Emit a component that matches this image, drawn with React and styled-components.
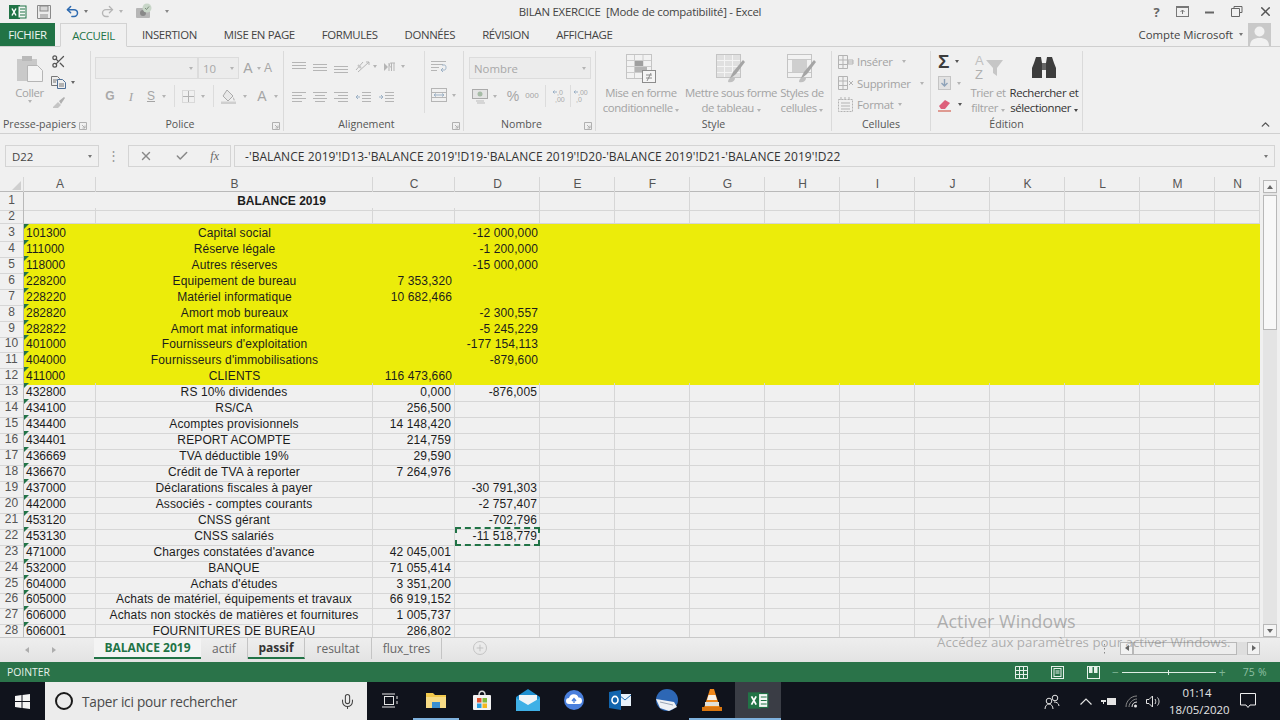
import React from "react";
import styled, { createGlobalStyle } from "styled-components";
import { Scissors, Undo2, Redo2, Check, X, ChevronUp, Mic, Plus } from "lucide-react";

const Global = createGlobalStyle`
  html, body { margin: 0; padding: 0; background: #f0f0f0; overflow: hidden; }
  #root { width: 1280px; height: 720px; }
`;

const UI = `"Open Sans", "Noto Sans", "Liberation Sans", sans-serif`;

const Page = styled.div`
  position: relative;
  width: 1280px;
  height: 720px;
  overflow: hidden;
  display: flex;
  flex-direction: column;
  background: #f0f0f0;
  font-family: ${UI};
  color: #444;
`;

/* ---------- title bar ---------- */
const TitleBar = styled.div`
  height: 23px;
  display: grid;
  grid-template-columns: 1fr auto 1fr;
  align-items: center;
`;
const Qat = styled.div`
  display: flex;
  align-items: center;
  padding-left: 9px;
`;
const QatSlot = styled.span`
  display: inline-flex;
  align-items: center;
  margin-left: ${(p) => p.$ml || 0}px;
`;
const Title = styled.div`
  font-size: 11.4px;
  letter-spacing: -0.25px;
  color: #444;
  white-space: pre;
`;
const WinControls = styled.div`
  display: flex;
  justify-content: flex-end;
  align-items: center;
  gap: 15px;
  padding-right: 7px;
  color: #555;
`;
const HelpMark = styled.span`
  font-size: 13px;
  font-weight: 700;
  color: #666;
  width: 13px;
  text-align: center;
  margin-right: -2px;
`;

/* ---------- tabs ---------- */
const TabBar = styled.div`
  height: 24px;
  display: flex;
  align-items: stretch;
  border-bottom: 1px solid #cfcfcf;
  box-sizing: border-box;
  letter-spacing: -0.38px;
`;
const FileTab = styled.div`
  width: 55px;
  background: #217346;
  color: #eef5f0;
  font-size: 11.4px;
  display: flex;
  align-items: center;
  justify-content: center;
`;
const HomeTab = styled.div`
  width: 67px;
  margin-left: 5px;
  height: 24px;
  box-sizing: border-box;
  border: 1px solid #d2d2d2;
  border-bottom: 1px solid #f0f0f0;
  color: #217346;
  font-size: 11.4px;
  display: flex;
  align-items: center;
  justify-content: center;
`;
const TabList = styled.div`
  display: flex;
  align-items: center;
  gap: 27px;
  margin-left: 15px;
  font-size: 11.4px;
  color: #444;
`;
const Account = styled.div`
  margin-left: auto;
  display: flex;
  align-items: center;
  font-size: 11.4px;
  letter-spacing: -0.05px;
  color: #444;
  padding-right: 9px;
`;
const Avatar = styled.div`
  width: 23px;
  height: 23px;
  margin-left: 5px;
  background: #c9c9c9;
  overflow: hidden;
`;

/* ---------- ribbon ---------- */
const Ribbon = styled.div`
  height: 87px;
  box-sizing: border-box;
  border-bottom: 1px solid #d0d0d0;
  display: flex;
  padding-top: 4px;
`;
const Group = styled.div`
  width: ${(p) => p.$w}px;
  box-sizing: border-box;
  border-right: ${(p) => (p.$noLine ? "none" : "1px solid #dadada")};
  height: 80px;
  display: flex;
  flex-direction: column;
  position: relative;
`;
const GroupBody = styled.div`
  flex: 1;
  display: flex;
  min-height: 0;
`;
const GroupLabel = styled.div`
  height: 13px;
  line-height: 13px;
  font-size: 10.6px;
  color: #555;
  text-align: ${(p) => p.$align || "center"};
  padding-left: ${(p) => p.$pl || 0}px;
  padding-right: ${(p) => p.$pr || 0}px;
  white-space: nowrap;
`;
const Launcher = styled.svg`
  position: absolute;
  right: 3px;
  bottom: 1px;
  width: 8px;
  height: 8px;
`;
const Stack = styled.div`
  display: flex;
  flex-direction: column;
  padding-left: ${(p) => p.$pl || 0}px;
  padding-top: ${(p) => p.$pt || 0}px;
  gap: ${(p) => p.$gap || 0}px;
  width: ${(p) => (p.$w ? `${p.$w}px` : "auto")};
  align-items: ${(p) => p.$align || "stretch"};
`;
const Row = styled.div`
  display: flex;
  align-items: center;
  gap: ${(p) => p.$gap || 0}px;
  height: ${(p) => (p.$h ? `${p.$h}px` : "auto")};
  padding-left: ${(p) => p.$pl || 0}px;
`;
const Combo = styled.div`
  width: ${(p) => p.$w}px;
  height: 22px;
  box-sizing: border-box;
  border: 1px solid #dcdcdc;
  background: #ececec;
  display: flex;
  align-items: center;
  justify-content: space-between;
  padding: 0 4px;
  font-size: 11.4px;
  color: #a8a8a8;
`;
const Caret = styled.span`
  display: inline-block;
  width: 0;
  height: 0;
  border-left: 2.5px solid transparent;
  border-right: 2.5px solid transparent;
  border-top: 3px solid ${(p) => p.$c || "#b4b4b4"};
  margin-left: ${(p) => p.$ml || 0}px;
`;
const Glyph = styled.span`
  font-family: ${(p) => p.$serif ? '"Liberation Serif", serif' : '"Liberation Sans", sans-serif'};
  font-size: ${(p) => p.$s || 12}px;
  font-weight: ${(p) => (p.$b ? 700 : 400)};
  font-style: ${(p) => (p.$i ? "italic" : "normal")};
  text-decoration: ${(p) => (p.$u ? "underline" : "none")};
  color: ${(p) => p.$c || "#a9a9a9"};
  display: inline-block;
  width: ${(p) => (p.$w ? `${p.$w}px` : "auto")};
  margin-left: ${(p) => p.$ml || 0}px;
  text-align: center;
  line-height: 1;
`;
const VSep = styled.span`
  width: 1px;
  height: ${(p) => p.$h || 22}px;
  background: #dcdcdc;
  margin: ${(p) => p.$m || "0 8px"};
`;
const BigLabel = styled.div`
  font-size: 11.4px;
  line-height: 15px;
  letter-spacing: -0.38px;
  color: ${(p) => p.$c || "#a3a3a3"};
  text-align: center;
  white-space: nowrap;
  margin-top: ${(p) => p.$mt || 0}px;
`;
const StyleBtn = styled.div`
  width: ${(p) => p.$w}px;
  display: flex;
  flex-direction: column;
  align-items: center;
  padding-top: 3px;
`;
const CellBtn = styled.div`
  display: flex;
  align-items: center;
  gap: 3px;
  height: 21.5px;
  font-size: 11.4px;
  letter-spacing: -0.3px;
  color: #a3a3a3;
`;

/* ---------- formula bar ---------- */
const FormulaArea = styled.div`
  height: 22px;
  margin-top: 11px;
  display: flex;
  align-items: stretch;
  padding-left: 5px;
  padding-right: 5px;
`;
const NameBox = styled.div`
  width: 94px;
  box-sizing: border-box;
  border: 1px solid #d4d4d4;
  display: flex;
  align-items: center;
  justify-content: space-between;
  padding: 0 6px;
  font-size: 11.4px;
  color: #444;
`;
const Dots = styled.div`
  width: 29px;
  text-align: center;
  font-size: 13px;
  line-height: 20px;
  color: #999;
`;
const FxButtons = styled.div`
  width: 103px;
  box-sizing: border-box;
  border: 1px solid #d4d4d4;
  display: flex;
  align-items: center;
  justify-content: space-between;
  padding: 0 11px 0 10px;
  color: #888;
`;
const FormulaInput = styled.div`
  flex: 1;
  margin-left: 3px;
  box-sizing: border-box;
  border: 1px solid #d4d4d4;
  display: flex;
  align-items: center;
  justify-content: space-between;
  padding: 0 6px 0 10px;
  font-size: 12px;
  letter-spacing: 0.07px;
  color: #333;
  white-space: pre;
`;

/* ---------- sheet ---------- */
const SheetArea = styled.div`
  margin-top: 10px;
  height: 460px;
  display: flex;
  overflow: hidden;
`;
const Sheet = styled.div`
  width: 1260px;
  overflow: hidden;
  font-family: "Liberation Sans", sans-serif;
`;
const COLS = "24px 72px 277px 82px 85px repeat(9, 75px) 45px";
const HeaderRow = styled.div`
  display: grid;
  grid-template-columns: ${COLS};
  height: 15px;
  box-sizing: border-box;
  border-bottom: 1px solid #b9b9b9;
`;
const ColHead = styled.div`
  border-right: 1px solid #d6d6d6;
  padding-left: 1px;
  font-size: 12px;
  line-height: 15px;
  text-align: center;
  color: #555;
  position: relative;
`;
const Corner = styled.div`
  position: absolute;
  right: 2px;
  bottom: 2px;
  width: 0;
  height: 0;
  border-left: 9px solid transparent;
  border-bottom: 9px solid #cfcfcf;
`;
const SheetRow = styled.div`
  display: grid;
  grid-template-columns: ${COLS};
  height: 15.94px;
`;
const RowHead = styled.div`
  box-sizing: border-box;
  border-right: 1px solid #b9b9b9;
  border-bottom: 1px solid #d6d6d6;
  font-size: 12px;
  line-height: 17px;
  text-align: center;
  color: #555;
  overflow: hidden;
`;
const Cell = styled.div`
  box-sizing: border-box;
  position: relative;
  font-size: 12px;
  line-height: 18px;
  letter-spacing: ${(p) => (p.$bold || p.$mark ? 0 : 0.12)}px;
  color: #1c1c1c;
  white-space: nowrap;
  overflow: visible;
  text-align: ${(p) => p.$align || "left"};
  padding: 0 ${(p) => p.$pr || 2}px 0 2px;
  grid-column: ${(p) => (p.$span ? `span ${p.$span}` : "auto")};
  font-weight: ${(p) => (p.$bold ? 700 : 400)};
  background: ${(p) => (p.$yellow ? "#ecec0a" : "transparent")};
  border-right: ${(p) => (p.$yellow ? "none" : "1px solid #d6d6d6")};
  border-bottom: ${(p) => (p.$yellow ? "none" : "1px solid #d6d6d6")};
  ${(p) => p.$selected && "outline: 2px dashed #217346; outline-offset: -2px; z-index: 2;"}
  ${(p) =>
    p.$mark &&
    `&::before { content: ""; position: absolute; left: 0; top: 0; width: 0; height: 0;
      border-top: 5px solid #217346; border-right: 5px solid transparent; }`}
`;
const VScroll = styled.div`
  width: 20px;
  box-sizing: border-box;
  padding: 3px 3px 0;
  display: flex;
  flex-direction: column;
`;
const ScrollBtn = styled.div`
  height: 13px;
  box-sizing: border-box;
  border: 1px solid #b8b8b8;
  background: #f4f4f4;
  display: flex;
  align-items: center;
  justify-content: center;
`;
const Arrow = styled.span`
  width: 0;
  height: 0;
  ${(p) => p.$dir === "up" && "border-left:3.5px solid transparent;border-right:3.5px solid transparent;border-bottom:4px solid #666;"}
  ${(p) => p.$dir === "down" && "border-left:3.5px solid transparent;border-right:3.5px solid transparent;border-top:4px solid #666;"}
  ${(p) => p.$dir === "left" && "border-top:3.5px solid transparent;border-bottom:3.5px solid transparent;border-right:4px solid #666;"}
  ${(p) => p.$dir === "right" && "border-top:3.5px solid transparent;border-bottom:3.5px solid transparent;border-left:4px solid #666;"}
`;
const VThumb = styled.div`
  height: 135px;
  box-sizing: border-box;
  margin-top: 2px;
  border: 1px solid #b8b8b8;
  background: #f8f8f8;
`;
const VTrack = styled.div`
  flex: 1;
  background: #e4e4e4;
  display: flex;
  flex-direction: column;
`;

/* ---------- sheet tabs ---------- */
const SheetTabs = styled.div`
  height: 25px;
  display: flex;
  align-items: stretch;
  background: linear-gradient(#eeeeee, #e3e3e3);
  border-top: 1px solid #c9c9c9;
  box-sizing: border-box;
`;
const TabNav = styled.div`
  width: 94px;
  display: flex;
  align-items: center;
  gap: 23px;
  padding-left: 25px;
  box-sizing: border-box;
  opacity: 0.45;
`;
const SheetTab = styled.div`
  width: ${(p) => p.$w}px;
  height: 21px;
  box-sizing: border-box;
  display: flex;
  align-items: center;
  justify-content: center;
  font-size: 12px;
  font-weight: ${(p) => (p.$bold ? 700 : 400)};
  color: ${(p) => (p.$active ? "#217346" : p.$bold ? "#333" : "#666")};
  background: ${(p) => (p.$active ? "#f4f4f4" : "transparent")};
  border-bottom: ${(p) => (p.$line ? "2px solid #217346" : "none")};
  border-right: ${(p) => (p.$active ? "none" : "1px solid #c4c4c4")};
`;
const AddSheet = styled.div`
  margin-left: 31px;
  margin-top: 3px;
  width: 14px;
  height: 14px;
  box-sizing: border-box;
  border: 1px solid #c4c4c4;
  border-radius: 50%;
  color: #bbb;
  display: flex;
  align-items: center;
  justify-content: center;
`;
const HScroll = styled.div`
  margin-left: auto;
  display: flex;
  align-items: center;
  padding-right: 20px;
  height: 20px;
`;
const HBtn = styled.div`
  width: 13px;
  height: 13px;
  box-sizing: border-box;
  border: 1px solid #b8b8b8;
  background: #f2f2f2;
  display: flex;
  align-items: center;
  justify-content: center;
`;
const HThumb = styled.div`
  width: 104px;
  height: 13px;
  box-sizing: border-box;
  border: 1px solid #b8b8b8;
  background: #ededed;
`;
const HGap = styled.div`
  width: 10px;
  height: 13px;
  background: #dedede;
`;

/* ---------- status bar ---------- */
const StatusBar = styled.div`
  height: 20px;
  background: #2a7349;
  color: #e6f1ea;
  display: flex;
  align-items: center;
  font-size: 10.4px;
  padding: 0 13px 0 7px;
`;
const StatusRight = styled.div`
  margin-left: auto;
  display: flex;
  align-items: center;
`;
const ViewIcon = styled.span`
  display: inline-flex;
  margin-right: ${(p) => p.$mr}px;
`;
const Zoomer = styled.div`
  display: flex;
  align-items: center;
  gap: 3px;
  color: #7fb595;
  font-size: 12px;
`;
const SliderLine = styled.div`
  width: 94px;
  height: 1px;
  background: #dfeee5;
  display: flex;
  justify-content: center;
  align-items: center;
`;
const SliderTick = styled.div`
  width: 1px;
  height: 5px;
  background: #dfeee5;
`;
const ZoomPct = styled.span`
  margin-left: 17px;
  color: #8fc0a3;
  font-size: 10.4px;
  letter-spacing: 0.3px;
`;

/* ---------- taskbar ---------- */
const Taskbar = styled.div`
  height: 38px;
  background: #10131c;
  display: flex;
  align-items: stretch;
  color: #e8e8e8;
`;
const StartBtn = styled.div`
  width: 45px;
  display: flex;
  align-items: center;
  justify-content: center;
`;
const SearchBox = styled.div`
  width: 322px;
  background: #ececec;
  display: flex;
  align-items: center;
  padding: 0 11px 0 10px;
  box-sizing: border-box;
  color: #4a4a4a;
  font-size: 13.6px;
  letter-spacing: -0.2px;
`;
const SearchRing = styled.span`
  width: 18px;
  height: 18px;
  box-sizing: border-box;
  border: 2.5px solid #1a1a1a;
  border-radius: 50%;
  margin-right: 9px;
`;
const MicSlot = styled.span`
  margin-left: auto;
  display: inline-flex;
  color: #444;
`;
const TaskSlot = styled.div`
  width: 46px;
  display: flex;
  align-items: center;
  justify-content: center;
  box-sizing: border-box;
  background: ${(p) => (p.$active ? "#3a3d45" : "transparent")};
  border-bottom: ${(p) => (p.$open ? "2px solid #7fb2de" : "2px solid transparent")};
`;
const Tray = styled.div`
  margin-left: auto;
  display: flex;
  align-items: center;
`;
const TrayIcon = styled.span`
  display: inline-flex;
  margin-right: ${(p) => p.$mr || 0}px;
  margin-left: ${(p) => p.$ml || 0}px;
`;
const Clock = styled.div`
  text-align: center;
  font-size: 11.4px;
  line-height: 17px;
  color: #e4e4e4;
  width: 56px;
`;

const Watermark = styled.div`
  position: absolute;
  left: 937px;
  top: 610px;
  color: rgba(110, 110, 110, 0.5);
  pointer-events: none;
  z-index: 5;
`;
const WmTitle = styled.div`
  font-size: 18px;
  line-height: 22px;
`;
const WmSub = styled.div`
  font-size: 13.3px;
  line-height: 20px;
  white-space: nowrap;
`;

/* ---------- drawings ---------- */
const Svg = ({ w, h, children, ...rest }) => (
  <svg width={w} height={h} viewBox={`0 0 ${w} ${h}`} fill="none" overflow="visible" {...rest}>
    {children}
  </svg>
);

const ExcelMark = ({ size = 16 }) => (
  <svg width={size + 2} height={size} viewBox="0 0 18 16">
    <rect x="0" y="1" width="11" height="14" fill="#217346" />
    <rect x="9" y="2" width="8" height="12" fill="#f4f7f5" stroke="#217346" />
    <path d="M11 5h5M11 8h5M11 11h5" stroke="#217346" />
    <path d="M3 4.5l4 7M7 4.5l-4 7" stroke="#fff" strokeWidth="1.5" />
  </svg>
);

const Lines = ({ rows, c = "#b5b5b5" }) => (
  <Svg w={14} h={12}>
    {rows.map((r, i) => (
      <path key={i} d={`M${r[0]} ${r[2]}H${r[1]}`} stroke={c} />
    ))}
  </Svg>
);
const TOP = [[0, 14, 1.5], [0, 14, 4.5], [0, 14, 7.5]];
const MID = [[0, 14, 3.5], [0, 14, 6.5], [0, 14, 9.5]];
const BOT = [[0, 14, 5.5], [0, 14, 8.5], [0, 14, 11.5]];
const LEFT = [[0, 14, 1.5], [0, 10, 4.5], [0, 14, 7.5], [0, 10, 10.5]];
const CENTER = [[0, 14, 1.5], [2, 12, 4.5], [0, 14, 7.5], [2, 12, 10.5]];
const RIGHT = [[0, 14, 1.5], [4, 14, 4.5], [0, 14, 7.5], [4, 14, 10.5]];

const Launch = () => (
  <Launcher viewBox="0 0 8 8" fill="none" stroke="#b0b0b0">
    <path d="M.5 7.5V.5h7v7z" />
    <path d="M3 3l3 3M6 3.5V6H3.5" />
  </Launcher>
);

const PasteIcon = () => (
  <Svg w={27} h={27}>
    <rect x="1" y="4" width="20" height="22" fill="#c9c9c9" />
    <rect x="6" y="1" width="10" height="5" fill="#b9b9b9" />
    <path d="M11.5 10.5h10l5 5v11h-15z" fill="#f3f3f3" stroke="#b5b5b5" />
  </Svg>
);
const CopyIcon = () => (
  <Svg w={15} h={13}>
    <path d="M.5.5h6l2 2v7h-8z" fill="#eee" stroke="#777" />
    <path d="M6.5 3.5h5l3 3v6h-8z" fill="#eee" stroke="#4e6f96" />
    <path d="M2 4h4M2 6h3M8 8h5M8 10h5" stroke="#777" />
  </Svg>
);
const BrushIcon = () => (
  <Svg w={14} h={12}>
    <path d="M1 11l5-5 3 3-3 3H1z" fill="#c4c4c4" />
    <path d="M7 5l5-4 1 1-4 6z" fill="#b0b0b0" />
  </Svg>
);
const BordersIcon = () => (
  <Svg w={13} h={13}>
    <rect x=".5" y=".5" width="12" height="12" stroke="#c2c2c2" strokeDasharray="1 1" />
    <path d="M6.5 1v11M1 6.5h11" stroke="#b2b2b2" />
  </Svg>
);
const FillIcon = () => (
  <Svg w={16} h={15}>
    <path d="M6 1l6 6-5 5-5-5z" fill="#e8e8e8" stroke="#aaa" />
    <path d="M12 8c1.5 2 2 3 1.5 3.5S12 11 12 8z" fill="#b5b5b5" />
    <rect x="0" y="12.5" width="15" height="2.5" fill="#cfcfcf" />
  </Svg>
);
const OrientIcon = () => (
  <Svg w={16} h={15}>
    <path d="M1 11l7-8M3 13L14 3" stroke="#b5b5b5" />
    <path d="M11 3h3v3" stroke="#b5b5b5" />
    <path d="M3 6l3 3" stroke="#c5c5c5" strokeWidth="2" />
  </Svg>
);
const WrapDir = () => (
  <Svg w={12} h={10}>
    <path d="M0 1l4 4-4 4z" fill="#b5b5b5" />
    <path d="M5 1v8M7 1h4M7.5 1v8M10 1v8M7 1c-2 0-2 4 0 4" stroke="#b5b5b5" />
  </Svg>
);
const IndentIcon = ({ flip }) => (
  <Svg w={16} h={12}>
    <path d="M7 1.5h9M7 4.5h9M7 7.5h9M7 10.5h9" stroke="#b5b5b5" />
    <path d={flip ? "M1 6h4M3 4l2 2-2 2" : "M5 6H1M3 4L1 6l2 2"} stroke="#9bb0c5" />
  </Svg>
);
const WrapText = () => (
  <Svg w={16} h={14}>
    <path d="M0 1.5h15M0 4.5h12M0 7.5h8M0 10.5h6" stroke="#b5b5b5" />
    <path d="M11 5h2.5c2 0 2 5 0 5H10l2-2M10 10l2 2" stroke="#9bb0c5" />
  </Svg>
);
const MergeIcon = () => (
  <Svg w={16} h={14}>
    <rect x=".5" y=".5" width="15" height="13" stroke="#b5b5b5" />
    <path d="M1 4.5h14M1 9.5h14" stroke="#b5b5b5" />
    <path d="M3 7h10M5 5.5L3 7l2 1.5M11 5.5L13 7l-2 1.5" stroke="#9bb0c5" />
  </Svg>
);
const MoneyIcon = () => (
  <Svg w={16} h={15}>
    <rect x=".5" y=".5" width="15" height="9" fill="#e4e4e4" stroke="#aaa" />
    <circle cx="8" cy="5" r="2.5" fill="#a6bba6" />
    <path d="M4 12h8M5 14h8" stroke="#bbb" />
  </Svg>
);
const DecInc = ({ top, bottom }) => (
  <Svg w={16} h={14}>
    <text x="5" y="6" fontSize="7" fill="#aaa" fontFamily="Liberation Sans">{top}</text>
    <text x="3" y="13" fontSize="7" fill="#aaa" fontFamily="Liberation Sans">{bottom}</text>
    <path d="M5 3H1M2.5 1.5L1 3l1.5 1.5" stroke="#9bb0c5" />
  </Svg>
);
const CondIcon = () => (
  <Svg w={30} h={29}>
    <rect x=".5" y=".5" width="25" height="24" fill="#f2f2f2" stroke="#c4c4c4" />
    <path d="M8.5 1v23M17 1v23M1 6.5h24M1 12.5h24M1 18.5h24" stroke="#cccccc" />
    <rect x="9" y="7" width="8" height="5" fill="#9f9f9f" />
    <rect x="9" y="13" width="12" height="5" fill="#b4b4b4" />
    <rect x="16.5" y="16.5" width="13" height="12" fill="#f5f5f5" stroke="#8c8c8c" />
    <path d="M20 21h6M20 24h6M25 19l-4 8" stroke="#8c8c8c" />
  </Svg>
);
const TableIcon = () => (
  <Svg w={30} h={29}>
    <rect x=".5" y=".5" width="24" height="23" fill="#e0e0e0" stroke="#c4c4c4" />
    <path d="M1 6.5h23M1 12.5h23M1 18.5h23M8.5 1v22M16.5 1v22" stroke="#f4f4f4" />
    <path d="M14 24l3-6 10-12 2 2-9 12-6 5z" fill="#a5a5a5" />
    <path d="M12 28c0-4 4-6 7-4 0 3-3 5-7 4z" fill="#c0c0c0" />
  </Svg>
);
const CellStyleIcon = () => (
  <Svg w={30} h={29}>
    <rect x=".5" y=".5" width="24" height="23" fill="#f2f2f2" stroke="#c4c4c4" />
    <rect x="5" y="6" width="15" height="12" fill="#cfcfcf" />
    <path d="M1 5.5h23M1 18.5h23" stroke="#c9c9c9" />
    <path d="M14 24l3-6 10-12 2 2-9 12-6 5z" fill="#a5a5a5" />
    <path d="M12 28c0-4 4-6 7-4 0 3-3 5-7 4z" fill="#c0c0c0" />
  </Svg>
);
const CellInsert = ({ kind }) => (
  <Svg w={16} h={16}>
    <path d="M.5 1.5h9v13h-9zM.5 6h9M.5 10.5h9M5 1.5v13" stroke="#b3b3b3" />
    {kind === "ins" && <path d="M10 8h5M10 6h5v4h-5z" stroke="#b3b3b3" />}
    {kind === "del" && <path d="M11 6l4 4M15 6l-4 4" stroke="#b3b3b3" />}
  </Svg>
);
const FormatIcon = () => (
  <Svg w={16} h={15}>
    <rect x=".5" y="2.5" width="14" height="12" stroke="#b3b3b3" strokeDasharray="2 1" />
    <path d="M3 6h9M3 9h9M3 12h9" stroke="#b3b3b3" />
    <path d="M3 0v3M7 0v3M11 0v3" stroke="#b3b3b3" />
  </Svg>
);
const FillDown = () => (
  <Svg w={13} h={14}>
    <rect x=".5" y=".5" width="12" height="13" fill="#e2e2e2" stroke="#c4c4c4" />
    <path d="M6.5 3v7M3.5 7l3 3 3-3" stroke="#8ea2b8" strokeWidth="1.4" />
  </Svg>
);
const Eraser = () => (
  <Svg w={14} h={14}>
    <path d="M1 8l6-6 5 3-5 6H3z" fill="#dd5f7a" />
    <path d="M0 13h13" stroke="#c43" strokeWidth="1" />
  </Svg>
);
const SortFilter = () => (
  <Svg w={29} h={26}>
    <text x="1" y="11" fontSize="13" fill="#c0c0c0" fontFamily="Liberation Sans">A</text>
    <text x="1" y="25" fontSize="13" fill="#b0b0b0" fontFamily="Liberation Sans">Z</text>
    <path d="M12 6h17l-6 8v8l-4-3v-5z" fill="#c6c6c6" />
  </Svg>
);
const Binoculars = () => (
  <Svg w={26} h={26}>
    <path d="M3 9l2-6h5l1 6v15H1V14z" fill="#3d3d3d" />
    <path d="M23 9l-2-6h-5l-1 6v15h10V14z" fill="#3d3d3d" />
    <rect x="11" y="9" width="4" height="7" fill="#666" />
  </Svg>
);
const CameraIcon = () => (
  <Svg w={17} h={17}>
    <rect x="0" y="5" width="14" height="10" rx="1" fill="#b6b6b6" />
    <circle cx="7" cy="10" r="3" fill="#888" />
    <circle cx="11" cy="5" r="4.5" fill="#c8d6c8" />
    <path d="M9 5l1.5 1.5L13 3.5" stroke="#7c8f7c" />
  </Svg>
);
const SaveIcon = () => (
  <Svg w={14} h={14}>
    <path d="M.5.5h13v13H.5z" stroke="#8a8a8a" fill="#ececec" />
    <rect x="3" y="1" width="8" height="5" fill="#d6d6d6" stroke="#8a8a8a" />
    <rect x="3" y="9" width="8" height="4" fill="#bbb" />
  </Svg>
);
const ResizeDots = () => (
  <Svg w={3} h={11} style={{ marginRight: 14 }}>
    <path d="M1.5 1v1.500M1.500 5v1.500M1.500 9v1.500" stroke="#888" />
  </Svg>
);
const GridIcon = () => (
  <Svg w={13} h={13}>
    <path d="M.5.5h12v12H.5zM4.5 1v11M8.5 1v11M1 4.5h11M1 8.5h11" stroke="#e6f1ea" />
  </Svg>
);
const PageIcon = () => (
  <Svg w={13} h={13}>
    <rect x=".5" y=".5" width="12" height="12" stroke="#e6f1ea" />
    <rect x="3" y="2.5" width="7" height="8" stroke="#e6f1ea" />
    <path d="M4.5 5h4M4.5 7h4" stroke="#e6f1ea" />
  </Svg>
);
const BreakIcon = () => (
  <Svg w={13} h={13}>
    <rect x=".5" y=".5" width="12" height="12" stroke="#e6f1ea" />
    <rect x="2" y="1" width="3.5" height="6" fill="#e6f1ea" />
    <rect x="7" y="1" width="3.5" height="6" fill="#e6f1ea" />
  </Svg>
);
const WinLogo = () => (
  <Svg w={15} h={15}>
    <path d="M0 2l6.5-1v6H0zM7.5 1L15 0v7H7.5zM0 8h6.5v6L0 13zM7.5 8H15v7l-7.5-1z" fill="#f4f4f4" />
  </Svg>
);
const TaskView = () => (
  <Svg w={16} h={15}>
    <rect x="2.5" y="3.5" width="9" height="8" stroke="#e4e4e4" />
    <path d="M0 1h13M0 14h13M15 3v3M15 8v3" stroke="#e4e4e4" />
  </Svg>
);
const FolderIcon = () => (
  <Svg w={20} h={16}>
    <path d="M0 1h7l2 2h11v13H0z" fill="#f2c94c" />
    <rect x="0" y="5" width="20" height="11" fill="#f7dc86" />
    <rect x="6" y="10" width="8" height="6" fill="#3a8fd0" />
  </Svg>
);
const StoreIcon = () => (
  <Svg w={20} h={20}>
    <path d="M7 5c0-5 6-5 6 0" stroke="#ddd" strokeWidth="1.5" />
    <rect x="1" y="5" width="18" height="15" rx="1" fill="#f2f2f2" />
    <rect x="5" y="8" width="4.5" height="4.5" fill="#e2502e" />
    <rect x="10.5" y="8" width="4.5" height="4.5" fill="#7fb93a" />
    <rect x="5" y="13.5" width="4.5" height="4.5" fill="#2a9fe0" />
    <rect x="10.5" y="13.5" width="4.5" height="4.5" fill="#f5b71e" />
  </Svg>
);
const MailIcon = () => (
  <Svg w={24} h={22}>
    <path d="M0 8L12 0l12 8v14H0z" fill="#1f8fd0" />
    <path d="M3 6h18v6l-9 5-9-5z" fill="#f0f4f7" />
    <path d="M0 9l12 7 12-7v13H0z" fill="#3fb0e6" />
  </Svg>
);
const DriveIcon = () => (
  <Svg w={20} h={20}>
    <circle cx="10" cy="10" r="10" fill="#4a7fdc" />
    <path d="M5 14a3 3 0 0 1 0-6 5 5 0 0 1 9.5-.5A3 3 0 0 1 15 14z" fill="#fff" />
    <path d="M10 13V9M8 11l2-2.500 2 2.500" stroke="#4a7fdc" strokeWidth="1.3" />
  </Svg>
);
const OutlookIcon = () => (
  <Svg w={22} h={20}>
    <rect x="10" y="4" width="12" height="12" fill="#e8f1fa" />
    <path d="M10 5l6 5 6-5" stroke="#1f6cb5" />
    <path d="M0 2l12-2v20L0 18z" fill="#1265ae" />
    <ellipse cx="6" cy="10" rx="3" ry="3.6" stroke="#fff" strokeWidth="1.6" />
  </Svg>
);
const BirdIcon = () => (
  <Svg w={23} h={23}>
    <circle cx="12" cy="11" r="11" fill="#2d67b5" />
    <path d="M1 10l18 3 3 5-8 4-9-3z" fill="#eef1f5" />
    <path d="M5 13l13 3" stroke="#9aa5b5" />
  </Svg>
);
const ConeIcon = () => (
  <Svg w={20} h={22}>
    <path d="M8 0h4l6 19H2z" fill="#f0881a" />
    <path d="M6.500 6h7l1.500 5H5z" fill="#f6f2ea" />
    <path d="M0 18h20v4H0z" fill="#d97610" />
    <rect x="3" y="13" width="14" height="4" fill="#e0e0d8" />
  </Svg>
);
const People = () => (
  <Svg w={16} h={15}>
    <circle cx="11" cy="4" r="2.8" stroke="#e4e4e4" />
    <circle cx="5" cy="7" r="2.8" stroke="#e4e4e4" />
    <path d="M1 15c0-3 2-5 4-5s4 2 4 5M10 8c2 0 5 1 5 4" stroke="#e4e4e4" />
  </Svg>
);
const TrayUp = () => (
  <Svg w={12} h={7}>
    <path d="M.5 6.500l5.500-5.500 5.500 5.500" stroke="#e4e4e4" strokeWidth="1.2" />
  </Svg>
);
const Power = () => (
  <Svg w={16} h={11}>
    <path d="M2 1v3M5 1v3M1 4h5v2H4v2H3V6H1z" fill="#e4e4e4" />
    <rect x="7" y="2" width="9" height="7" fill="#e4e4e4" />
  </Svg>
);
const Wifi = () => (
  <Svg w={13} h={13}>
    <path d="M1 12c0-6 5-11 11-11M4 12c0-4 4-8 8-8" stroke="#8a8a8a" />
    <path d="M7 12c0-3 2-5 5-5" stroke="#e4e4e4" />
    <circle cx="10.500" cy="11" r="1.500" fill="#e4e4e4" />
  </Svg>
);
const Volume = () => (
  <Svg w={16} h={13}>
    <path d="M.5 4.500h2.500L6.500 1v11L3 8.500H.5z" stroke="#e4e4e4" />
    <path d="M9 4c1 1.500 1 3.500 0 5M11.500 2.500c2 2.500 2 5.500 0 8" stroke="#e4e4e4" />
  </Svg>
);
const Notif = () => (
  <Svg w={16} h={16}>
    <path d="M.5.500h15v11.500H10L8 14.500 6 12H.5z" stroke="#eee" />
  </Svg>
);

/* ---------- data ---------- */
const rows = [
  ["101300", "Capital social", "", "-12 000,000"],
  ["111000", "Réserve légale", "", "-1 200,000"],
  ["118000", "Autres réserves", "", "-15 000,000"],
  ["228200", "Equipement de bureau", "7 353,320", ""],
  ["228220", "Matériel informatique", "10 682,466", ""],
  ["282820", "Amort mob bureaux", "", "-2 300,557"],
  ["282822", "Amort mat informatique", "", "-5 245,229"],
  ["401000", "Fournisseurs d'exploitation", "", "-177 154,113"],
  ["404000", "Fournisseurs d'immobilisations", "", "-879,600"],
  ["411000", "CLIENTS", "116 473,660", ""],
  ["432800", "RS 10% dividendes", "0,000", "-876,005"],
  ["434100", "RS/CA", "256,500", ""],
  ["434400", "Acomptes provisionnels", "14 148,420", ""],
  ["434401", "REPORT ACOMPTE", "214,759", ""],
  ["436669", "TVA déductible 19%", "29,590", ""],
  ["436670", "Crédit de TVA à reporter", "7 264,976", ""],
  ["437000", "Déclarations fiscales à payer", "", "-30 791,303"],
  ["442000", "Associés - comptes courants", "", "-2 757,407"],
  ["453120", "CNSS gérant", "", "-702,796"],
  ["453130", "CNSS salariés", "", "-11 518,779"],
  ["471000", "Charges constatées d'avance", "42 045,001", ""],
  ["532000", "BANQUE", "71 055,414", ""],
  ["604000", "Achats d'études", "3 351,200", ""],
  ["605000", "Achats de matériel, équipements et travaux", "66 919,152", ""],
  ["606000", "Achats non stockés de matières et fournitures", "1 005,737", ""],
  ["606001", "FOURNITURES DE BUREAU", "286,802", ""],
];
const colLetters = ["A", "B", "C", "D", "E", "F", "G", "H", "I", "J", "K", "L", "M", "N"];
const blanks = colLetters.slice(4);

const formula =
  "-'BALANCE 2019'!D13-'BALANCE 2019'!D19-'BALANCE 2019'!D20-'BALANCE 2019'!D21-'BALANCE 2019'!D22";

export default function App() {
  return (
    <Page>
      <Global />

      <TitleBar>
        <Qat>
          <ExcelMark />
          <QatSlot $ml={10}><SaveIcon /></QatSlot>
          <QatSlot $ml={14}><Undo2 size={15} color="#2f6bb0" strokeWidth={2.4} /></QatSlot>
          <QatSlot><Caret $c="#777" $ml={4} /></QatSlot>
          <QatSlot $ml={12}><Redo2 size={15} color="#b5b5b5" strokeWidth={2.2} /></QatSlot>
          <QatSlot><Caret $ml={4} /></QatSlot>
          <QatSlot $ml={13}><CameraIcon /></QatSlot>
          <QatSlot $ml={12}><Caret $c="#888" /></QatSlot>
        </Qat>
        <Title>BILAN EXERCICE  [Mode de compatibilité] - Excel</Title>
        <WinControls>
          <HelpMark>?</HelpMark>
          <Svg w={13} h={11}>
            <rect x=".5" y=".5" width="12" height="10" stroke="#777" />
            <path d="M1 1.500h11M6.500 8V4M4.500 6l2-2 2 2" stroke="#777" />
          </Svg>
          <Svg w={12} h={11}>
            <path d="M1 6.500h9" stroke="#666" strokeWidth="2" />
          </Svg>
          <Svg w={12} h={11}>
            <path d="M3 2.500V.5h8v6H9M.5 2.500h8v8h-8z" stroke="#666" />
          </Svg>
          <X size={15} color="#555" strokeWidth={2.4} />
        </WinControls>
      </TitleBar>

      <TabBar>
        <FileTab>FICHIER</FileTab>
        <HomeTab>ACCUEIL</HomeTab>
        <TabList>
          <span>INSERTION</span>
          <span>MISE EN PAGE</span>
          <span>FORMULES</span>
          <span>DONNÉES</span>
          <span>RÉVISION</span>
          <span>AFFICHAGE</span>
        </TabList>
        <Account>
          Compte Microsoft
          <Caret $c="#777" $ml={6} />
          <Avatar>
            <Svg w={23} h={23}>
              <circle cx="11.500" cy="8.500" r="5" fill="#f1f1f1" />
              <path d="M2 23c0-6 4-8 9.500-8S21 17 21 23z" fill="#f1f1f1" />
            </Svg>
          </Avatar>
        </Account>
      </TabBar>

      <Ribbon>
        <Group $w={91}>
          <GroupBody>
            <Stack $pl={12} $pt={4} $w={35} $align="center">
              <PasteIcon />
              <BigLabel $mt={3}>Coller</BigLabel>
              <Caret />
            </Stack>
            <Stack $pl={4} $pt={3} $gap={7}>
              <Scissors size={15} color="#555" />
              <Row $gap={5}><CopyIcon /><Caret $c="#666" /></Row>
              <Row $pl={1}><BrushIcon /></Row>
            </Stack>
          </GroupBody>
          <GroupLabel $align="left" $pl={3}>Presse-papiers</GroupLabel>
          <Launch />
        </Group>

        <Group $w={193}>
          <GroupBody>
            <Stack $pl={4} $pt={6} $gap={6}>
              <Row>
                <Combo $w={103}><span /><Caret /></Combo>
                <Combo $w={41}>10<Caret /></Combo>
                <Glyph $s={14} $w={18} $c="#a5a5a5">A</Glyph>
                <Caret />
                <Glyph $s={12} $w={14} $c="#a5a5a5">A</Glyph>
              </Row>
              <Row $pl={9}>
                <Glyph $s={12} $b $w={12}>G</Glyph>
                <Glyph $s={13} $i $serif $w={12} $c="#a5a5a5" $ml={9}>I</Glyph>
                <Glyph $s={12} $u $w={12} $c="#a5a5a5" $ml={8}>S</Glyph>
                <Caret $ml={5} />
                <VSep $m="0 7px 0 8px" />
                <BordersIcon />
                <Caret $ml={6} />
                <VSep $m="0 7px 0 8px" />
                <FillIcon />
                <Caret $ml={6} />
                <Glyph $s={14} $w={14} $c="#a5a5a5" $ml={8}>A</Glyph>
                <Caret $ml={5} />
              </Row>
            </Stack>
          </GroupBody>
          <GroupLabel $pr={14}>Police</GroupLabel>
          <Launch />
        </Group>

        <Group $w={180}>
          <GroupBody>
            <Stack $pl={8} $pt={8} $gap={17} $w={132}>
              <Row $gap={7}>
                <Lines rows={TOP} />
                <Lines rows={MID} />
                <Lines rows={BOT} />
                <OrientIcon />
                <Caret $ml={-5} />
                <WrapDir />
                <Caret $ml={-2} />
              </Row>
              <Row $gap={7}>
                <Lines rows={LEFT} />
                <Lines rows={CENTER} />
                <Lines rows={RIGHT} />
                <IndentIcon />
                <IndentIcon flip />
              </Row>
            </Stack>
            <VSep $h={62} $m="0 6px 0 0" />
            <Stack $pt={9} $gap={14}>
              <WrapText />
              <Row $gap={5}><MergeIcon /><Caret /></Row>
            </Stack>
          </GroupBody>
          <GroupLabel $pr={14}>Alignement</GroupLabel>
          <Launch />
        </Group>

        <Group $w={132}>
          <GroupBody>
            <Stack $pl={5} $pt={6} $gap={6}>
              <Combo $w={122}>Nombre<Caret /></Combo>
              <Row $pl={3}>
                <MoneyIcon />
                <Caret $ml={5} />
                <Glyph $s={14} $w={14} $c="#a5a5a5" $ml={9}>%</Glyph>
                <Glyph $s={8} $w={14} $c="#a5a5a5" $ml={5}>000</Glyph>
                <VSep $m="0 6px" />
                <DecInc top=",0" bottom=",00" />
                <VSep $h={0} $m="0 2px" />
                <DecInc top=",00" bottom=",0" />
              </Row>
            </Stack>
          </GroupBody>
          <GroupLabel $pr={16}>Nombre</GroupLabel>
          <Launch />
        </Group>

        <Group $w={236}>
          <GroupBody>
            <Row $pl={4} style={{ alignItems: "flex-start" }}>
              <StyleBtn $w={82}>
                <CondIcon />
                <BigLabel $mt={2}>Mise en forme<br />conditionnelle <Caret /></BigLabel>
              </StyleBtn>
              <StyleBtn $w={98}>
                <TableIcon />
                <BigLabel $mt={2}>Mettre sous forme<br />de tableau <Caret /></BigLabel>
              </StyleBtn>
              <StyleBtn $w={44}>
                <CellStyleIcon />
                <BigLabel $mt={2}>Styles de<br />cellules <Caret /></BigLabel>
              </StyleBtn>
            </Row>
          </GroupBody>
          <GroupLabel>Style</GroupLabel>
        </Group>

        <Group $w={99}>
          <GroupBody>
            <Stack $pl={6}>
              <CellBtn><CellInsert kind="ins" />Insérer<Caret $ml={6} /></CellBtn>
              <CellBtn><CellInsert kind="del" />Supprimer<Caret $ml={6} /></CellBtn>
              <CellBtn><FormatIcon />Format<Caret $ml={1} /></CellBtn>
            </Stack>
          </GroupBody>
          <GroupLabel>Cellules</GroupLabel>
        </Group>

        <Group $w={152}>
          <GroupBody>
            <Stack $pl={7} $w={29}>
              <Row $gap={6} $h={21.5}>
                <Glyph $s={19} $c="#3c3c3c" $b>Σ</Glyph>
                <Caret $c="#555" />
              </Row>
              <Row $gap={6} $h={21.5}><FillDown /><Caret /></Row>
              <Row $gap={6} $h={21.5}><Eraser /><Caret $c="#555" /></Row>
            </Stack>
            <StyleBtn $w={42}>
              <SortFilter />
              <BigLabel $mt={5}>Trier et<br />filtrer <Caret /></BigLabel>
            </StyleBtn>
            <StyleBtn $w={70}>
              <Binoculars />
              <BigLabel $mt={5} $c="#333">Rechercher et<br />sélectionner <Caret $c="#444" /></BigLabel>
            </StyleBtn>
          </GroupBody>
          <GroupLabel>Édition</GroupLabel>
        </Group>

        <Group $w={197} $noLine style={{ alignItems: "flex-end", justifyContent: "flex-end" }}>
          <GroupLabel $pr={8}><ChevronUp size={13} color="#555" strokeWidth={2.5} /></GroupLabel>
        </Group>
      </Ribbon>

      <FormulaArea>
        <NameBox>D22<Caret $c="#777" /></NameBox>
        <Dots>⋮</Dots>
        <FxButtons>
          <X size={14} color="#888" strokeWidth={2.4} />
          <Check size={14} color="#888" strokeWidth={2.6} />
          <Glyph $s={12} $i $serif $c="#666">fx</Glyph>
        </FxButtons>
        <FormulaInput>
          {formula}
          <Caret $c="#777" />
        </FormulaInput>
      </FormulaArea>

      <SheetArea>
        <Sheet>
          <HeaderRow>
            <ColHead><Corner /></ColHead>
            {colLetters.map((c) => <ColHead key={c}>{c}</ColHead>)}
          </HeaderRow>
          <SheetRow>
            <RowHead>1</RowHead>
            <Cell $span={4} $align="center" $bold>BALANCE 2019</Cell>
            {blanks.map((c) => <Cell key={c} />)}
          </SheetRow>
          <SheetRow>
            <RowHead>2</RowHead>
            {colLetters.map((c) => <Cell key={c} />)}
          </SheetRow>
          {rows.map((r, i) => {
            const n = i + 3;
            const yellow = n <= 12;
            return (
              <SheetRow key={r[0]}>
                <RowHead>{n}</RowHead>
                <Cell $yellow={yellow} $mark>{r[0]}</Cell>
                <Cell $yellow={yellow} $align="center">{r[1]}</Cell>
                <Cell $yellow={yellow} $align="right" $pr={3}>{r[2]}</Cell>
                <Cell $yellow={yellow} $align="right" $selected={n === 22}>{r[3]}</Cell>
                {blanks.map((c) => <Cell key={c} $yellow={yellow} />)}
              </SheetRow>
            );
          })}
        </Sheet>
        <VScroll>
          <ScrollBtn><Arrow $dir="up" /></ScrollBtn>
          <VTrack>
            <VThumb />
          </VTrack>
          <ScrollBtn><Arrow $dir="down" /></ScrollBtn>
        </VScroll>
      </SheetArea>

      <SheetTabs>
        <TabNav>
          <Arrow $dir="left" />
          <Arrow $dir="right" />
        </TabNav>
        <SheetTab $w={107} $active $bold $line>BALANCE 2019</SheetTab>
        <SheetTab $w={47}>actif</SheetTab>
        <SheetTab $w={57} $bold $line>passif</SheetTab>
        <SheetTab $w={67}>resultat</SheetTab>
        <SheetTab $w={70}>flux_tres</SheetTab>
        <AddSheet><Plus size={10} /></AddSheet>
        <HScroll>
          <ResizeDots />
          <HBtn><Arrow $dir="left" /></HBtn>
          <HThumb />
          <HGap />
          <HBtn><Arrow $dir="right" /></HBtn>
        </HScroll>
      </SheetTabs>

      <StatusBar>
        POINTER
        <StatusRight>
          <ViewIcon $mr={23}><GridIcon /></ViewIcon>
          <ViewIcon $mr={23}><PageIcon /></ViewIcon>
          <ViewIcon $mr={12}><BreakIcon /></ViewIcon>
          <Zoomer>
            −
            <SliderLine><SliderTick /></SliderLine>
            +
          </Zoomer>
          <ZoomPct>75 %</ZoomPct>
        </StatusRight>
      </StatusBar>

      <Taskbar>
        <StartBtn><WinLogo /></StartBtn>
        <SearchBox>
          <SearchRing />
          Taper ici pour rechercher
          <MicSlot><Mic size={17} strokeWidth={1.5} /></MicSlot>
        </SearchBox>
        <TaskSlot><TaskView /></TaskSlot>
        <TaskSlot $open><FolderIcon /></TaskSlot>
        <TaskSlot><StoreIcon /></TaskSlot>
        <TaskSlot><MailIcon /></TaskSlot>
        <TaskSlot><DriveIcon /></TaskSlot>
        <TaskSlot><OutlookIcon /></TaskSlot>
        <TaskSlot><BirdIcon /></TaskSlot>
        <TaskSlot $open><ConeIcon /></TaskSlot>
        <TaskSlot $open $active><ExcelMark size={19} /></TaskSlot>
        <Tray>
          <TrayIcon $mr={20}><People /></TrayIcon>
          <TrayIcon $mr={8}><TrayUp /></TrayIcon>
          <TrayIcon $mr={9}><Power /></TrayIcon>
          <TrayIcon $mr={8}><Wifi /></TrayIcon>
          <TrayIcon $mr={7}><Volume /></TrayIcon>
          <Clock>01:14<br />18/05/2020</Clock>
          <TrayIcon $mr={24} $ml={15}><Notif /></TrayIcon>
        </Tray>
      </Taskbar>

      <Watermark>
        <WmTitle>Activer Windows</WmTitle>
        <WmSub>Accédez aux paramètres pour activer Windows.</WmSub>
      </Watermark>
    </Page>
  );
}
